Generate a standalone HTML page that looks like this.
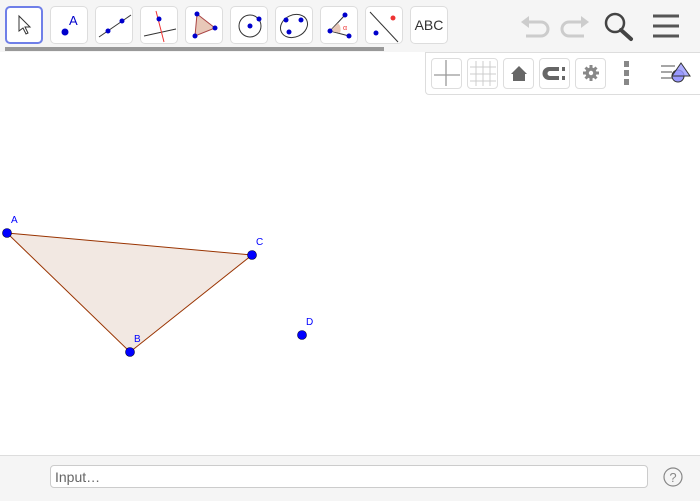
<!DOCTYPE html>
<html><head><style>
body{margin:0;width:700px;height:500px;overflow:hidden;background:#fff;font-family:"Liberation Sans",sans-serif;position:relative}
.tb{position:absolute;left:0;top:0;width:700px;height:52px;background:#f5f5f5}
.btn{position:absolute;top:6px;width:38px;height:38px;background:#fff;border:1px solid #ddd;border-radius:5px;box-sizing:border-box}
.sel{border:2px solid #6f7fe8}
.bar{position:absolute;left:5px;top:47px;width:379px;height:4px;background:#999}
.bot{position:absolute;left:0;top:455px;width:700px;height:45px;background:#f5f5f5;border-top:1px solid #ddd}
.inp{position:absolute;left:50px;top:465px;width:598px;height:23px;border:1px solid #ccc;border-radius:4px;background:#fff;box-sizing:border-box;font-size:14px;color:#666;padding:3px 4px}
.sb{position:absolute;left:425px;top:52px;width:275px;height:43px;background:#fff;border:1px solid #ddd;border-right:none;border-radius:0 0 0 4px;box-sizing:border-box}
.s{position:absolute;top:58px;width:31px;height:31px;border:1px solid #ddd;border-radius:4px;box-sizing:border-box;background:#fff}
</style></head><body>
<div class="tb"></div>
<div class="btn sel" style="left:5px"></div>
<div class="btn" style="left:50px"></div>
<div class="btn" style="left:95px"></div>
<div class="btn" style="left:140px"></div>
<div class="btn" style="left:185px"></div>
<div class="btn" style="left:230px"></div>
<div class="btn" style="left:275px"></div>
<div class="btn" style="left:320px"></div>
<div class="btn" style="left:365px"></div>
<div class="btn" style="left:410px;font-size:14px;line-height:36px;text-align:center;color:#333">ABC</div>
<div class="bar"></div>
<div class="sb"></div>
<div class="s" style="left:431px"></div><div class="s" style="left:467px"></div><div class="s" style="left:503px"></div><div class="s" style="left:539px"></div><div class="s" style="left:575px"></div>
<svg width="700" height="500" style="position:absolute;left:0;top:0">
<g fill="#fff" stroke="#333" stroke-width="1"><path d="M19 16 L19 31 L23 28 L26 34 L28 33 L25 27 L30 27 Z"/></g>
<circle cx="65" cy="32" r="3.5" fill="#00c"/><text x="69" y="25" font-size="13" fill="#00c" font-family="Liberation Sans">A</text>
<line x1="99" y1="37" x2="131" y2="15" stroke="#333"/><circle cx="108" cy="31" r="2.5" fill="#00c"/><circle cx="122" cy="21" r="2.5" fill="#00c"/>
<line x1="144" y1="36" x2="176" y2="29" stroke="#333"/><line x1="156" y1="11" x2="164" y2="42" stroke="#e33"/><circle cx="159" cy="19" r="2.5" fill="#00c"/>
<path d="M197 14 L215 28 L195 36 Z" fill="#e8c8b8" stroke="#a44"/><circle cx="197" cy="14" r="2.5" fill="#00c"/><circle cx="215" cy="28" r="2.5" fill="#00c"/><circle cx="195" cy="36" r="2.5" fill="#00c"/>
<circle cx="250" cy="26" r="11" fill="none" stroke="#333"/><circle cx="250" cy="26" r="2.5" fill="#00c"/><circle cx="259" cy="19" r="2.5" fill="#00c"/>
<ellipse cx="294" cy="26" rx="14" ry="11" fill="none" stroke="#333" transform="rotate(-25 294 26)"/><circle cx="286" cy="20" r="2.5" fill="#00c"/><circle cx="301" cy="20" r="2.5" fill="#00c"/><circle cx="289" cy="32" r="2.5" fill="#00c"/>
<path d="M345 15 L330 31 L349 36" fill="none" stroke="#333"/><path d="M330 31 L338 23 A10 10 0 0 1 340 33 Z" fill="#e8c8b8"/><circle cx="345" cy="15" r="2.5" fill="#00c"/><circle cx="330" cy="31" r="2.5" fill="#00c"/><circle cx="349" cy="36" r="2.5" fill="#00c"/><text x="343" y="30" font-size="7" fill="#e33">α</text>
<line x1="370" y1="12" x2="398" y2="42" stroke="#333"/><circle cx="376" cy="33" r="2.5" fill="#00c"/><circle cx="393" cy="18" r="2.5" fill="#e33"/>
<g fill="none" stroke="#ccc" stroke-width="3"><path d="M528 22 L541 22 A7 7 0 0 1 541 36 L526 36"/><path d="M582 22 L569 22 A7 7 0 0 0 569 36 L584 36"/></g>
<path d="M521 22 L529 16 L529 28Z" fill="#ccc"/><path d="M589 22 L581 16 L581 28Z" fill="#ccc"/>
<circle cx="615" cy="23" r="9" fill="none" stroke="#444" stroke-width="2.5"/><line x1="621" y1="30" x2="631" y2="39" stroke="#444" stroke-width="4" stroke-linecap="round"/>
<g stroke="#555" stroke-width="3"><line x1="653" y1="16" x2="679" y2="16"/><line x1="653" y1="26" x2="679" y2="26"/><line x1="653" y1="36" x2="679" y2="36"/></g>
<g stroke="#999" stroke-width="1.3"><line x1="446" y1="60" x2="446" y2="86"/><line x1="434" y1="75" x2="460" y2="75"/></g>
<g stroke="#ccc"><line x1="476" y1="61" x2="476" y2="86"/><line x1="483" y1="61" x2="483" y2="86"/><line x1="490" y1="61" x2="490" y2="86"/><line x1="470" y1="67" x2="496" y2="67"/><line x1="470" y1="74" x2="496" y2="74"/><line x1="470" y1="81" x2="496" y2="81"/></g>
<path d="M511 74 L519 66 L527 74 L525 74 L525 81 L513 81 L513 74Z" fill="#666"/>
<path d="M559 67 L549 67 A6.5 6.5 0 0 0 549 80 L559 80 L559 76 L550 76 A2.5 2.5 0 0 1 550 71 L559 71Z" fill="#666"/><rect x="562" y="67" width="3" height="4" fill="#666"/><rect x="562" y="76" width="3" height="4" fill="#666"/>
<circle cx="591" cy="73" r="5.5" fill="#888"/><g stroke="#888" stroke-width="3"><line x1="591" y1="65" x2="591" y2="81"/><line x1="583" y1="73" x2="599" y2="73"/><line x1="585.5" y1="67.5" x2="596.5" y2="78.5"/><line x1="596.5" y1="67.5" x2="585.5" y2="78.5"/></g><circle cx="591" cy="73" r="2.2" fill="#fff"/>
<g fill="#888"><rect x="624" y="61" width="5" height="6"/><rect x="624" y="70" width="5" height="6"/><rect x="624" y="79" width="5" height="6"/></g>
<g stroke="#888" stroke-width="1.5"><line x1="661" y1="66" x2="675" y2="66"/><line x1="661" y1="72" x2="672" y2="72"/><line x1="661" y1="78" x2="672" y2="78"/></g>
<circle cx="678" cy="76" r="6" fill="#99f" stroke="#333"/><path d="M681 63 L690 76 L672 76Z" fill="#99f" stroke="#333" fill-opacity=".8"/>
<path d="M7 233 L252 255 L130 352 Z" fill="#f2e8e2" stroke="#993300" stroke-width="1"/>
<g fill="#00f" stroke="#003" stroke-width=".6"><circle cx="7" cy="233" r="4.5"/><circle cx="252" cy="255" r="4.5"/><circle cx="130" cy="352" r="4.5"/><circle cx="302" cy="335" r="4.5"/></g>
<g fill="#00f" font-size="10" font-family="Liberation Sans"><text x="11" y="223">A</text><text x="256" y="245">C</text><text x="134" y="342">B</text><text x="306" y="325">D</text></g>
</svg>
<div class="bot"></div>
<div class="inp">Input…</div>
<svg width="22" height="22" style="position:absolute;left:662px;top:466px"><circle cx="11" cy="11" r="9" fill="none" stroke="#888" stroke-width="1.2"/><text x="11" y="16" font-size="13" text-anchor="middle" fill="#888" font-family="Liberation Sans">?</text></svg>
</body></html>
